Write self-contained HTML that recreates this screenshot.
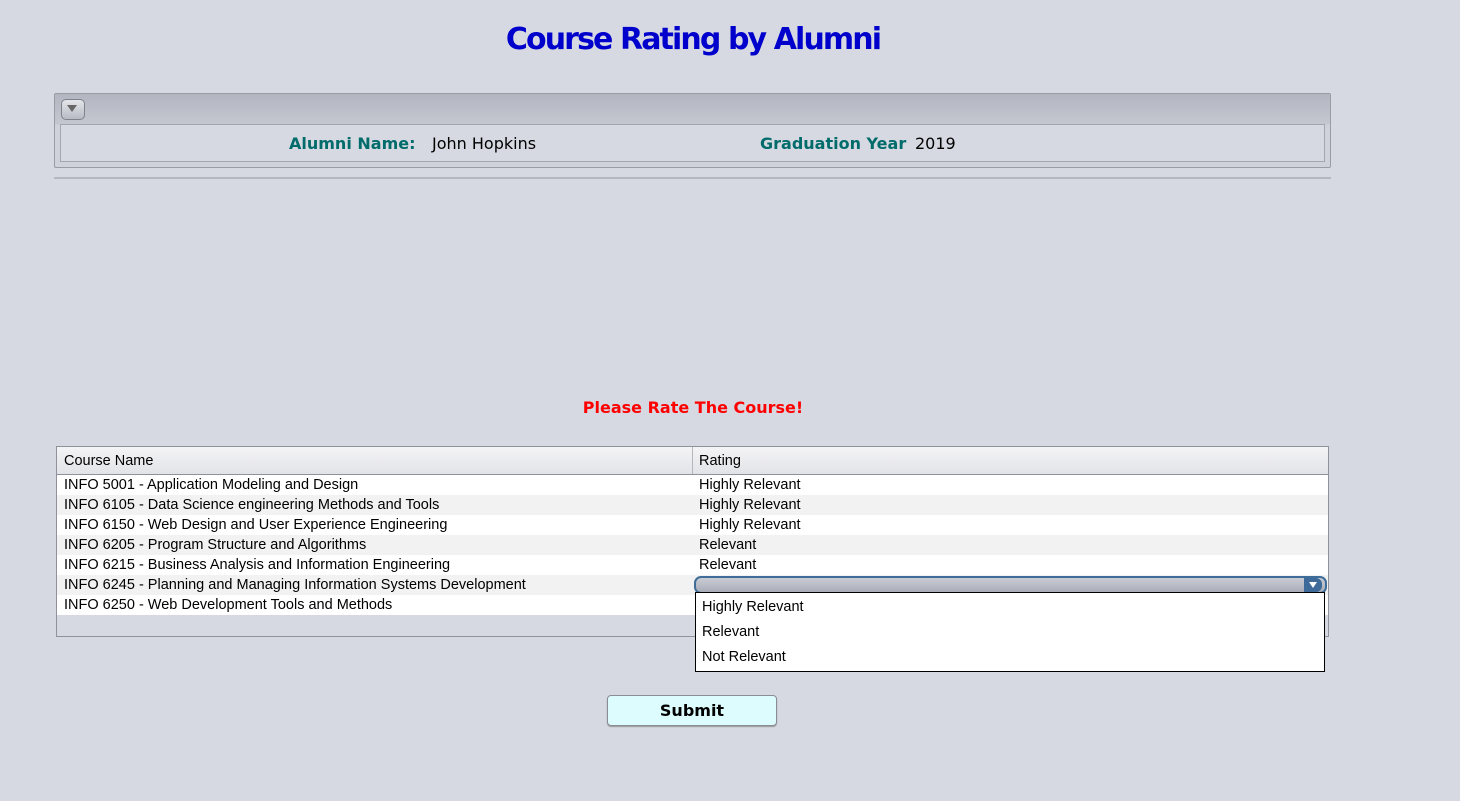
<!DOCTYPE html>
<html><head><meta charset="utf-8"><style>
body{margin:0;width:1460px;height:801px;background:#d6d9e1;position:relative;overflow:hidden;font-family:"Liberation Sans",Arial,sans-serif;}
.a{position:absolute}
h1{position:absolute;margin:0;left:0;width:1386px;text-align:center;top:22px;font:bold 30px "DejaVu Sans",sans-serif;color:#0000cc;letter-spacing:-1.9px}
.lbl{font:bold 16px "DejaVu Sans",sans-serif;color:#006b6b}
.val{font:16px "DejaVu Sans",sans-serif;color:#000}
.row{position:absolute;left:57px;width:1271px;height:20px;font-size:14.5px;line-height:20px}
.row span{position:absolute;left:7px}
.row span+span{left:642px}
</style></head><body>
<h1>Course Rating by Alumni</h1>
<div class="a" style="left:54px;top:93px;width:1275px;height:73px;border:1px solid #9a9ca4;border-radius:2px;background:linear-gradient(#b3b6c0,#c4c7d0 30px,#cfd2da 31px);"></div>
<div class="a" style="left:61px;top:99px;width:22px;height:19px;border:1px solid #7f828a;border-radius:5px;background:linear-gradient(#e3e5ea,#b8bbc4);"></div>
<div class="a" style="left:67px;top:105px;width:0;height:0;border-left:5px solid transparent;border-right:5px solid transparent;border-top:7px solid #666"></div>
<div class="a" style="left:60px;top:124px;width:1263px;height:36px;border:1px solid #a3a6ae;background:#d6d9e1;"></div>
<div class="a lbl" style="left:289px;top:134px">Alumni Name:</div>
<div class="a val" style="left:432px;top:134px">John Hopkins</div>
<div class="a lbl" style="left:760px;top:134px">Graduation Year</div>
<div class="a val" style="left:915px;top:134px">2019</div>
<div class="a" style="left:54px;top:177px;width:1277px;height:2px;background:#b4b7bf"></div>
<div class="a" style="left:0;width:1386px;top:398px;text-align:center;font:bold 16px 'DejaVu Sans',sans-serif;color:#ff0000">Please Rate The Course!</div>
<div class="a" style="left:56px;top:446px;width:1271px;height:189px;border:1px solid #8f929a;background:#d6d9e1"></div>
<div class="a" style="left:57px;top:447px;width:1271px;height:27px;background:linear-gradient(#f4f4f6,#e2e3e8);border-bottom:1px solid #8f929a;font-size:14.5px;line-height:28px"><span style="position:absolute;left:7px">Course Name</span><span style="position:absolute;left:635px;top:0;height:27px;border-left:1px solid #b5b7bd"></span><span style="position:absolute;left:642px">Rating</span></div>
<div class="row" style="top:475px;background:#fff"><span>INFO 5001 - Application Modeling and Design</span><span>Highly Relevant</span></div>
<div class="row" style="top:495px;background:#f2f2f2"><span>INFO 6105 - Data Science engineering Methods and Tools</span><span>Highly Relevant</span></div>
<div class="row" style="top:515px;background:#fff"><span>INFO 6150 - Web Design and User Experience Engineering</span><span>Highly Relevant</span></div>
<div class="row" style="top:535px;background:#f2f2f2"><span>INFO 6205 - Program Structure and Algorithms</span><span>Relevant</span></div>
<div class="row" style="top:555px;background:#fff"><span>INFO 6215 - Business Analysis and Information Engineering</span><span>Relevant</span></div>
<div class="row" style="top:575px;background:#f2f2f2"><span>INFO 6245 - Planning and Managing Information Systems Development</span></div>
<div class="row" style="top:595px;background:#fff"><span>INFO 6250 - Web Development Tools and Methods</span></div>
<div class="a" style="left:694px;top:576px;width:629px;height:14px;border:2px solid #3f6d9a;border-radius:7px;background:linear-gradient(#c9ccd4,#a9adb8)"></div>
<div class="a" style="left:1304px;top:578px;width:18px;height:14px;background:#3d6a98;border-radius:0 6px 6px 0"></div>
<div class="a" style="left:1309px;top:582px;width:0;height:0;border-left:4px solid transparent;border-right:4px solid transparent;border-top:6px solid #fff"></div>
<div class="a" style="left:695px;top:592px;width:628px;height:78px;border:1px solid #000;background:#fff;font-size:14.5px">
<div class="a" style="left:6px;top:6px">Highly Relevant</div>
<div class="a" style="left:6px;top:31px">Relevant</div>
<div class="a" style="left:6px;top:56px">Not Relevant</div>
</div>
<div class="a" style="left:607px;top:695px;width:168px;height:29px;border:1px solid #8a8d95;border-radius:4px;background:#ddfcfe;box-shadow:0 1px 1px #999;text-align:center;font:bold 16px 'DejaVu Sans',sans-serif;line-height:30px">Submit</div>
</body></html>
